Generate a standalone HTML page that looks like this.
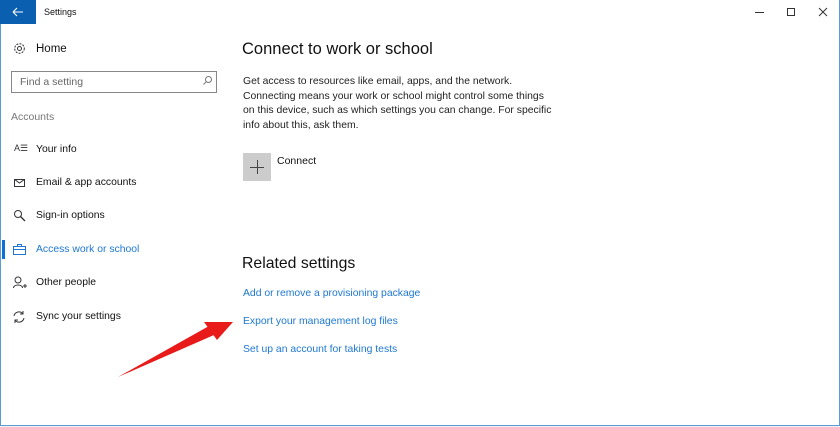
<!DOCTYPE html>
<html><head><meta charset="utf-8"><style>
*{margin:0;padding:0;box-sizing:border-box}
body{width:840px;height:427px;background:#f0f0f0;font-family:"Liberation Sans",sans-serif;position:relative;overflow:hidden}
#win{position:absolute;left:0;top:0;width:840px;height:426px;background:#fff;border:1px solid #5c9bd6;border-top:none}
.t{position:absolute;white-space:nowrap}
.nav{font-size:10.4px;color:#111}
.ic{position:absolute}
.lnk{font-size:10.4px;color:#1e78d2}
</style></head><body>
<div id="win">
<div style="position:absolute;left:-1px;top:0;width:36px;height:24px;background:#0b5fb0"></div>
<svg class="ic" style="left:10px;top:6px" width="14" height="12"><path d="M2 6H12M2 6L6 2M2 6L6 10" stroke="#fff" stroke-width="1.1" fill="none"/></svg>
<div class="t" style="left:43px;top:7px;font-size:9px;color:#111">Settings</div>
<div class="ic" style="left:754px;top:12px;width:9px;height:1px;background:#333"></div>
<div class="ic" style="left:786px;top:8px;width:8px;height:8px;border:1px solid #333"></div>
<svg class="ic" style="left:817px;top:7px" width="10" height="10"><path d="M1 1L9 9M9 1L1 9" stroke="#333" stroke-width="1"/></svg>

<svg class="ic" style="left:12px;top:42px" width="13" height="13"><circle cx="6.5" cy="6.5" r="2" fill="none" stroke="#333"/><circle cx="6.5" cy="6.5" r="4.8" fill="none" stroke="#333" stroke-dasharray="2 1.2"/></svg>
<div class="t nav" style="left:35px;top:43px;font-size:11.5px">Home</div>
<div style="position:absolute;left:10px;top:71px;width:206px;height:22px;border:1px solid #888"></div>
<div class="t" style="left:19px;top:76px;font-size:10.5px;color:#666">Find a setting</div>
<svg class="ic" style="left:201px;top:75px" width="11" height="11"><circle cx="6.5" cy="4.5" r="3" fill="none" stroke="#777"/><path d="M4.3 6.7L1.5 9.5" stroke="#777"/></svg>
<div class="t" style="left:10px;top:111px;font-size:10.5px;color:#777">Accounts</div>

<div class="t" style="left:13px;top:143px;font-size:9px;color:#333">A☰</div>
<div class="t nav" style="left:35px;top:144px">Your info</div>
<div class="ic" style="left:13px;top:179px;width:11px;height:8px;border:1px solid #333"></div>
<svg class="ic" style="left:13px;top:179px" width="11" height="8"><path d="M0 0L5.5 4L11 0" stroke="#333" fill="none"/></svg>
<div class="t nav" style="left:35px;top:177px">Email &amp; app accounts</div>
<svg class="ic" style="left:12px;top:209px" width="14" height="14"><circle cx="5" cy="5" r="3.5" fill="none" stroke="#333"/><path d="M7.5 7.5L12 12" stroke="#333" stroke-width="1.3"/></svg>
<div class="t nav" style="left:35px;top:210px">Sign-in options</div>
<div class="ic" style="left:1px;top:240px;width:3px;height:19px;background:#0b6fd4"></div>
<svg class="ic" style="left:12px;top:244px" width="14" height="11"><rect x="0.5" y="2.5" width="12" height="8" fill="none" stroke="#1e78d2"/><path d="M4.5 2.5V0.5H8.5V2.5M0.5 5.5H12.5" stroke="#1e78d2" fill="none"/></svg>
<div class="t lnk" style="left:35px;top:244px">Access work or school</div>
<svg class="ic" style="left:12px;top:276px" width="14" height="13"><circle cx="5" cy="4" r="3" fill="none" stroke="#333"/><path d="M0.5 12C0.5 8 9.5 8 9.5 12M10 10H14M12 8V12" stroke="#333" fill="none"/></svg>
<div class="t nav" style="left:35px;top:277px">Other people</div>
<svg class="ic" style="left:11px;top:310px" width="14" height="14"><path d="M2 6A5 5 0 0 1 11 4M12 8A5 5 0 0 1 3 10" stroke="#333" fill="none"/><path d="M11 1V4H8M3 13V10H6" stroke="#333" fill="none"/></svg>
<div class="t nav" style="left:35px;top:311px">Sync your settings</div>

<div class="t" style="left:241px;top:40px;font-size:16.5px;color:#111">Connect to work or school</div>
<div class="t" style="left:242px;top:75px;font-size:10.4px;color:#222;line-height:14.5px;white-space:normal;width:315px">Get access to resources like email, apps, and the network. Connecting means your work or school might control some things on this device, such as which settings you can change. For specific info about this, ask them.</div>
<div style="position:absolute;left:242px;top:153px;width:28px;height:28px;background:#ccc"></div>
<div class="ic" style="left:249px;top:167px;width:14px;height:1px;background:#444"></div>
<div class="ic" style="left:256px;top:160px;width:1px;height:14px;background:#444"></div>
<div class="t" style="left:276px;top:155px;font-size:10.5px;color:#111">Connect</div>

<div class="t" style="left:241px;top:255px;font-size:15.8px;color:#111">Related settings</div>
<div class="t lnk" style="left:242px;top:288px">Add or remove a provisioning package</div>
<div class="t lnk" style="left:242px;top:316px">Export your management log files</div>
<div class="t lnk" style="left:242px;top:344px">Set up an account for taking tests</div>
</div>
<svg style="position:absolute;left:0;top:0" width="840" height="427"><path d="M118 377L209 326L214 335Z" fill="#e81a1a"/><path d="M233 322L204 322L217 340Z" fill="#e81a1a"/></svg>
</body></html>
